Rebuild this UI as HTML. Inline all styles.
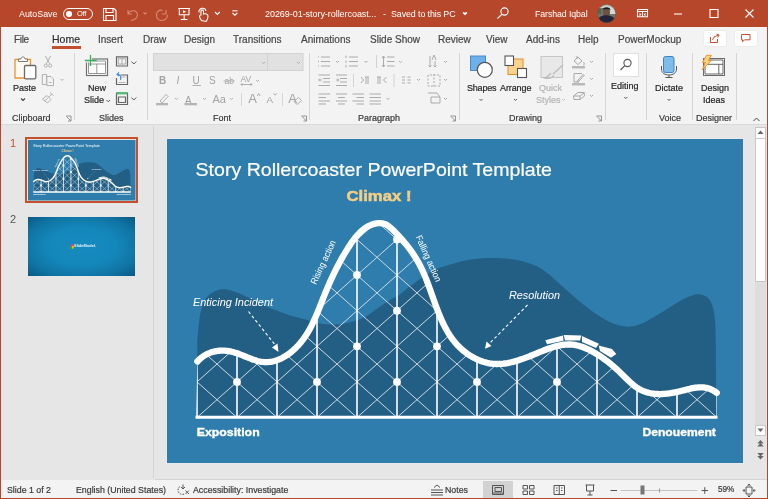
<!DOCTYPE html>
<html><head><meta charset="utf-8">
<style>
*{margin:0;padding:0;box-sizing:border-box}
html,body{width:768px;height:499px;overflow:hidden;background:#e6e6e6;font-family:"Liberation Sans",sans-serif;position:relative;-webkit-font-smoothing:antialiased}
.a,.tab,.lbl,.btn,.st{will-change:transform}
.tab,.lbl,.btn,.st{-webkit-text-stroke:0.2px currentColor}
.a{position:absolute;white-space:nowrap}
.t{color:#fff;font-size:9px}
.tab{position:absolute;top:33px;font-size:10px;color:#474747;white-space:nowrap}
.lbl{position:absolute;top:113px;font-size:9px;color:#383838;white-space:nowrap}
.btn{position:absolute;font-size:9px;color:#262626;white-space:nowrap}
.sep{position:absolute;top:53px;width:1px;height:67px;background:#d6d6d6}
.st{position:absolute;top:485px;font-size:8.8px;color:#3a3a3a;white-space:nowrap}
svg{position:absolute;overflow:visible;will-change:transform}
</style></head><body>
<!-- title bar -->
<div class="a" style="left:0;top:0;width:768px;height:27px;background:#b7472a"></div>
<!-- window borders -->
<div class="a" style="left:0;top:27px;width:1px;height:472px;background:#b7472a"></div>
<div class="a" style="left:767px;top:27px;width:1px;height:472px;background:#b7472a"></div>
<div class="a" style="left:0;top:498px;width:768px;height:1px;background:#b7472a"></div>
<!-- ribbon area -->
<div class="a" style="left:1px;top:27px;width:766px;height:97px;background:#f3f3f3"></div>
<div class="a" style="left:1px;top:124px;width:766px;height:1px;background:#dadada"></div>
<!-- status bar -->
<div class="a" style="left:1px;top:480px;width:766px;height:18px;background:#f3f3f3"></div>
<div class="a" style="left:155px;top:479px;width:612px;height:1px;background:#d4d4d4"></div>
<div class="a" style="left:153.2px;top:126px;width:1.1px;height:352px;background:#d4d4d4"></div>
<!-- main slide -->
<div class="a" style="left:166px;top:138px;width:578px;height:326px;background:#e9e9e9"></div>
<svg style="left:167px;top:139px" width="576" height="324" viewBox="167 139 576 324">
<defs><clipPath id="clipA"><path d="M197.39,361.50 L198.39,360.42 L199.43,359.40 L200.50,358.45 L201.60,357.55 L202.72,356.70 L203.87,355.92 L205.05,355.19 L206.25,354.51 L207.47,353.89 L208.71,353.33 L209.97,352.82 L211.25,352.36 L212.54,351.96 L213.85,351.61 L215.18,351.31 L216.52,351.07 L217.87,350.88 L219.23,350.74 L220.59,350.65 L221.97,350.61 L223.35,350.62 L224.73,350.68 L226.12,350.79 L227.51,350.95 L228.90,351.16 L230.29,351.41 L231.68,351.72 L233.06,352.07 L234.44,352.46 L235.82,352.88 L237.19,353.34 L238.56,353.83 L239.93,354.34 L241.30,354.87 L242.66,355.41 L244.02,355.96 L245.38,356.52 L246.73,357.07 L248.08,357.62 L249.43,358.16 L250.78,358.69 L252.12,359.19 L253.46,359.67 L254.80,360.13 L256.14,360.55 L257.47,360.93 L258.81,361.27 L260.14,361.56 L261.47,361.80 L262.79,361.98 L264.12,362.10 L265.44,362.16 L266.76,362.16 L268.08,362.10 L269.39,361.98 L270.70,361.80 L272.00,361.57 L273.30,361.29 L274.59,360.95 L275.87,360.57 L277.14,360.14 L278.40,359.66 L279.65,359.13 L280.90,358.56 L282.13,357.95 L283.34,357.30 L284.55,356.61 L285.74,355.89 L286.92,355.12 L288.08,354.33 L289.22,353.50 L290.35,352.63 L291.46,351.74 L292.56,350.82 L293.63,349.88 L294.69,348.91 L295.73,347.92 L296.74,346.90 L297.73,345.87 L298.70,344.81 L299.65,343.74 L300.58,342.66 L301.48,341.56 L302.35,340.44 L303.20,339.31 L304.03,338.18 L304.84,337.03 L305.63,335.86 L306.40,334.69 L307.15,333.51 L307.88,332.31 L308.59,331.11 L309.28,329.90 L309.96,328.67 L310.62,327.44 L311.27,326.21 L311.90,324.96 L312.52,323.71 L313.13,322.45 L313.73,321.19 L314.31,319.92 L314.89,318.64 L315.45,317.36 L316.01,316.08 L316.55,314.79 L317.10,313.50 L317.63,312.21 L318.16,310.92 L318.68,309.62 L319.20,308.32 L319.72,307.02 L320.23,305.72 L320.74,304.42 L321.25,303.13 L321.76,301.83 L322.27,300.53 L322.78,299.24 L323.29,297.94 L323.80,296.65 L324.32,295.37 L324.84,294.08 L325.37,292.80 L325.89,291.52 L326.42,290.25 L326.96,288.98 L327.50,287.71 L328.04,286.44 L328.59,285.18 L329.14,283.91 L329.70,282.65 L330.26,281.40 L330.83,280.14 L331.40,278.89 L331.98,277.64 L332.56,276.39 L333.15,275.14 L333.75,273.90 L334.35,272.66 L334.96,271.42 L335.57,270.18 L336.19,268.94 L336.82,267.71 L337.45,266.48 L338.10,265.25 L338.75,264.02 L339.41,262.79 L340.07,261.56 L340.74,260.34 L341.43,259.12 L342.12,257.89 L342.81,256.67 L343.52,255.45 L344.24,254.24 L344.96,253.02 L345.70,251.81 L346.44,250.59 L347.20,249.38 L347.96,248.17 L348.73,246.96 L349.52,245.75 L350.31,244.54 L351.12,243.35 L351.94,242.16 L352.78,240.99 L353.63,239.83 L354.50,238.69 L355.39,237.56 L356.29,236.46 L357.21,235.39 L358.16,234.34 L359.12,233.32 L360.11,232.33 L361.12,231.38 L362.16,230.46 L363.22,229.59 L364.30,228.75 L365.42,227.96 L366.56,227.22 L367.73,226.53 L368.93,225.88 L370.16,225.29 L371.43,224.76 L372.71,224.29 L374.02,223.90 L375.35,223.57 L376.68,223.33 L378.02,223.17 L379.35,223.11 L380.67,223.15 L381.98,223.30 L383.27,223.56 L384.53,223.94 L385.76,224.44 L386.95,225.08 L388.11,225.82 L389.23,226.66 L390.33,227.57 L391.41,228.54 L392.47,229.55 L393.51,230.57 L394.54,231.60 L395.56,232.64 L396.56,233.67 L397.56,234.71 L398.54,235.76 L399.51,236.80 L400.46,237.85 L401.41,238.91 L402.34,239.96 L403.26,241.03 L404.16,242.09 L405.06,243.16 L405.94,244.24 L406.81,245.32 L407.66,246.41 L408.51,247.51 L409.34,248.61 L410.16,249.71 L410.96,250.83 L411.76,251.95 L412.54,253.07 L413.31,254.21 L414.06,255.35 L414.80,256.50 L415.53,257.66 L416.25,258.83 L416.95,260.00 L417.64,261.18 L418.32,262.38 L418.98,263.58 L419.63,264.79 L420.27,266.01 L420.89,267.24 L421.51,268.48 L422.10,269.73 L422.69,270.99 L423.27,272.26 L423.83,273.54 L424.39,274.82 L424.94,276.11 L425.47,277.41 L426.00,278.71 L426.52,280.02 L427.04,281.34 L427.55,282.66 L428.05,283.98 L428.54,285.31 L429.04,286.64 L429.52,287.98 L430.01,289.32 L430.49,290.66 L430.97,292.00 L431.45,293.35 L431.92,294.69 L432.40,296.04 L432.87,297.39 L433.35,298.73 L433.82,300.08 L434.30,301.42 L434.78,302.76 L435.27,304.10 L435.75,305.44 L436.25,306.78 L436.74,308.11 L437.24,309.44 L437.75,310.76 L438.26,312.08 L438.79,313.39 L439.31,314.70 L439.85,316.00 L440.39,317.30 L440.95,318.59 L441.51,319.87 L442.09,321.14 L442.68,322.41 L443.27,323.66 L443.88,324.91 L444.51,326.15 L445.14,327.38 L445.79,328.60 L446.46,329.80 L447.14,331.00 L447.83,332.18 L448.55,333.35 L449.28,334.51 L450.02,335.66 L450.79,336.79 L451.57,337.91 L452.38,339.01 L453.20,340.10 L454.04,341.17 L454.91,342.23 L455.79,343.27 L456.70,344.30 L457.64,345.30 L458.59,346.29 L459.57,347.27 L460.57,348.22 L461.59,349.15 L462.64,350.07 L463.70,350.96 L464.79,351.83 L465.89,352.67 L467.01,353.50 L468.16,354.29 L469.31,355.07 L470.49,355.81 L471.68,356.53 L472.89,357.22 L474.11,357.88 L475.34,358.52 L476.59,359.12 L477.85,359.69 L479.12,360.23 L480.40,360.74 L481.70,361.21 L483.00,361.65 L484.31,362.06 L485.63,362.43 L486.96,362.76 L488.30,363.05 L489.64,363.31 L490.98,363.52 L492.34,363.70 L493.69,363.84 L495.06,363.93 L496.42,363.98 L497.79,364.00 L499.16,363.97 L500.53,363.91 L501.90,363.80 L503.28,363.67 L504.65,363.50 L506.03,363.30 L507.41,363.07 L508.79,362.80 L510.17,362.51 L511.55,362.20 L512.94,361.86 L514.32,361.49 L515.70,361.10 L517.08,360.70 L518.46,360.27 L519.84,359.82 L521.21,359.36 L522.59,358.88 L523.96,358.39 L525.33,357.88 L526.70,357.37 L528.07,356.84 L529.43,356.31 L530.79,355.77 L532.15,355.22 L533.50,354.67 L534.85,354.11 L536.20,353.56 L537.54,353.00 L538.87,352.45 L540.21,351.90 L541.54,351.36 L542.87,350.82 L544.19,350.30 L545.51,349.78 L546.83,349.28 L548.15,348.79 L549.47,348.32 L550.78,347.87 L552.09,347.44 L553.41,347.03 L554.72,346.64 L556.03,346.28 L557.34,345.95 L558.65,345.64 L559.96,345.37 L561.27,345.13 L562.58,344.92 L563.89,344.75 L565.21,344.62 L566.52,344.53 L567.84,344.48 L569.16,344.48 L570.48,344.52 L571.80,344.60 L573.13,344.74 L574.45,344.93 L575.78,345.16 L577.12,345.45 L578.45,345.78 L579.78,346.15 L581.11,346.56 L582.43,347.01 L583.75,347.50 L585.07,348.02 L586.38,348.58 L587.68,349.16 L588.98,349.78 L590.26,350.42 L591.54,351.08 L592.80,351.76 L594.06,352.47 L595.29,353.19 L596.52,353.92 L597.73,354.67 L598.92,355.43 L600.10,356.20 L601.26,356.98 L602.40,357.77 L603.53,358.56 L604.65,359.37 L605.76,360.19 L606.85,361.02 L607.93,361.85 L609.01,362.70 L610.07,363.56 L611.13,364.43 L612.17,365.31 L613.21,366.20 L614.25,367.10 L615.28,368.01 L616.31,368.93 L617.33,369.86 L618.35,370.81 L619.37,371.76 L620.39,372.73 L621.40,373.70 L622.42,374.69 L623.44,375.69 L624.46,376.70 L625.49,377.72 L626.52,378.74 L627.56,379.76 L628.60,380.78 L629.66,381.78 L630.72,382.76 L631.80,383.72 L632.89,384.66 L633.99,385.56 L635.11,386.42 L636.25,387.24 L637.41,388.02 L638.58,388.74 L639.78,389.41 L640.99,390.02 L642.22,390.59 L643.47,391.11 L644.74,391.59 L646.01,392.02 L647.31,392.40 L648.61,392.74 L649.93,393.04 L651.26,393.29 L652.61,393.51 L653.96,393.69 L655.32,393.82 L656.69,393.93 L658.07,393.99 L659.45,394.03 L660.84,394.03 L662.23,393.99 L663.63,393.93 L665.04,393.83 L666.44,393.71 L667.85,393.56 L669.26,393.38 L670.67,393.18 L672.08,392.96 L673.49,392.71 L674.89,392.44 L676.29,392.14 L677.69,391.83 L679.09,391.50 L680.48,391.16 L681.86,390.81 L683.24,390.45 L684.62,390.09 L685.99,389.73 L687.36,389.38 L688.72,389.04 L690.08,388.72 L691.44,388.42 L692.79,388.15 L694.14,387.91 L695.49,387.70 L696.83,387.53 L698.17,387.41 L699.51,387.34 L700.85,387.32 L702.18,387.35 L703.52,387.45 L704.85,387.62 L706.17,387.85 L707.50,388.16 L708.82,388.56 L710.15,389.03 L711.47,389.60 L712.79,390.26 L714.11,391.02 L715.43,391.88 L716.75,392.85 L716.6,417.5 L196,417.5 Z"/></clipPath></defs>

<rect x="167" y="139" width="576" height="324" fill="#2e7dad"/>
<path d="M197,417.5 L197.3,345  C197.4,343.5 197.1,341.6 197.7,336 C198.3,330.4 199.2,318.2 200.8,311.7 C202.4,305.2 204.3,300.5 207,297 C209.7,293.5 213.5,291.7 217,290.5 C220.5,289.3 223.3,288.9 228,289.8 C232.7,290.7 239.2,293.5 245,296 C250.8,298.5 255.8,301.9 263,305 C270.2,308.1 281.8,312.6 288,314.8 C294.2,317.0 295.8,316.9 300,318 C304.2,319.1 308.7,320.6 313,321.7 C317.3,322.8 321.7,323.9 326,324.3 C330.3,324.7 334.7,324.7 339,324.3 C343.3,323.9 347.7,322.9 352,321.7 C356.3,320.5 360.7,319.3 365,317 C369.3,314.7 373.7,310.9 378,308 C382.3,305.1 387.3,301.8 391,299.5 C394.7,297.2 396.8,296.5 400,294.3 C403.2,292.1 406.3,289.1 410,286.3 C413.7,283.6 418.0,280.5 422,277.8 C426.0,275.1 430.0,272.0 434,270 C438.0,268.0 442.0,267.1 446,265.8 C450.0,264.5 454.0,263.2 458,262.2 C462.0,261.2 466.3,260.4 470,259.8 C473.7,259.2 475.0,258.8 480,258.5 C485.0,258.2 493.2,257.9 500,258.3 C506.8,258.7 513.8,259.0 520.8,260.8 C527.8,262.6 534.8,264.7 541.7,269 C548.7,273.3 555.5,280.5 562.5,286.5 C569.5,292.5 577.1,299.6 584,305 C590.9,310.4 597.7,315.5 604,319 C610.3,322.5 616.3,325.0 622,326 C627.7,327.0 631.7,327.1 638,325 C644.3,322.9 653.0,317.5 660,313.5 C667.0,309.5 674.7,304.0 680,301 C685.3,298.0 688.5,296.6 692,295.5 C695.5,294.4 698.3,294.1 701,294.5 C703.7,294.9 706.1,296.1 708,298 C709.9,299.9 711.3,302.3 712.5,306 C713.7,309.7 714.5,314.3 715,320 C715.5,325.7 715.7,336.7 715.8,340 L716.2,417.5 Z" fill="#235f84"/>
<g clip-path="url(#clipA)">
<path d="M197,-9.7 L717,-472.5 M197,844.7 L717,1307.5 M197,25.9 L717,-436.9 M197,809.1 L717,1271.9 M197,61.5 L717,-401.3 M197,773.5 L717,1236.3 M197,97.1 L717,-365.7 M197,737.9 L717,1200.7 M197,132.7 L717,-330.1 M197,702.3 L717,1165.1 M197,168.3 L717,-294.5 M197,666.7 L717,1129.5 M197,203.9 L717,-258.9 M197,631.1 L717,1093.9 M197,239.5 L717,-223.3 M197,595.5 L717,1058.3 M197,275.1 L717,-187.7 M197,559.9 L717,1022.7 M197,310.7 L717,-152.1 M197,524.3 L717,987.1 M197,346.3 L717,-116.5 M197,488.7 L717,951.5 M197,381.9 L717,-80.9 M197,453.1 L717,915.9 M197,417.5 L717,-45.3 M197,417.5 L717,880.3 M197,453.1 L717,-9.7 M197,381.9 L717,844.7 M197,488.7 L717,25.9 M197,346.3 L717,809.1 M197,524.3 L717,61.5 M197,310.7 L717,773.5 M197,559.9 L717,97.1 M197,275.1 L717,737.9 M197,595.5 L717,132.7 M197,239.5 L717,702.3 M197,631.1 L717,168.3 M197,203.9 L717,666.7 M197,666.7 L717,203.9 M197,168.3 L717,631.1 M197,702.3 L717,239.5 M197,132.7 L717,595.5 M197,737.9 L717,275.1 M197,97.1 L717,559.9 M197,773.5 L717,310.7 M197,61.5 L717,524.3 M197,809.1 L717,346.3 M197,25.9 L717,488.7 M197,844.7 L717,381.9 M197,-9.7 L717,453.1 M197,880.3 L717,417.5 M197,-45.3 L717,417.5" stroke="#d5e0e8" stroke-width="0.95" fill="none"/>
<path d="M197,180 V417.5 M237,180 V417.5 M277,180 V417.5 M317,180 V417.5 M357,180 V417.5 M397,180 V417.5 M437,180 V417.5 M477,180 V417.5 M517,180 V417.5 M557,180 V417.5 M597,180 V417.5 M637,180 V417.5 M677,180 V417.5 M717,180 V417.5" stroke="#fff" stroke-width="1.6" fill="none"/>
</g>
<path d="M195.5,417.3 H717.5" stroke="#fff" stroke-width="3.0"/>
<path d="M197.39,361.50 L198.39,360.42 L199.43,359.40 L200.50,358.45 L201.60,357.55 L202.72,356.70 L203.87,355.92 L205.05,355.19 L206.25,354.51 L207.47,353.89 L208.71,353.33 L209.97,352.82 L211.25,352.36 L212.54,351.96 L213.85,351.61 L215.18,351.31 L216.52,351.07 L217.87,350.88 L219.23,350.74 L220.59,350.65 L221.97,350.61 L223.35,350.62 L224.73,350.68 L226.12,350.79 L227.51,350.95 L228.90,351.16 L230.29,351.41 L231.68,351.72 L233.06,352.07 L234.44,352.46 L235.82,352.88 L237.19,353.34 L238.56,353.83 L239.93,354.34 L241.30,354.87 L242.66,355.41 L244.02,355.96 L245.38,356.52 L246.73,357.07 L248.08,357.62 L249.43,358.16 L250.78,358.69 L252.12,359.19 L253.46,359.67 L254.80,360.13 L256.14,360.55 L257.47,360.93 L258.81,361.27 L260.14,361.56 L261.47,361.80 L262.79,361.98 L264.12,362.10 L265.44,362.16 L266.76,362.16 L268.08,362.10 L269.39,361.98 L270.70,361.80 L272.00,361.57 L273.30,361.29 L274.59,360.95 L275.87,360.57 L277.14,360.14 L278.40,359.66 L279.65,359.13 L280.90,358.56 L282.13,357.95 L283.34,357.30 L284.55,356.61 L285.74,355.89 L286.92,355.12 L288.08,354.33 L289.22,353.50 L290.35,352.63 L291.46,351.74 L292.56,350.82 L293.63,349.88 L294.69,348.91 L295.73,347.92 L296.74,346.90 L297.73,345.87 L298.70,344.81 L299.65,343.74 L300.58,342.66 L301.48,341.56 L302.35,340.44 L303.20,339.31 L304.03,338.18 L304.84,337.03 L305.63,335.86 L306.40,334.69 L307.15,333.51 L307.88,332.31 L308.59,331.11 L309.28,329.90 L309.96,328.67 L310.62,327.44 L311.27,326.21 L311.90,324.96 L312.52,323.71 L313.13,322.45 L313.73,321.19 L314.31,319.92 L314.89,318.64 L315.45,317.36 L316.01,316.08 L316.55,314.79 L317.10,313.50 L317.63,312.21 L318.16,310.92 L318.68,309.62 L319.20,308.32 L319.72,307.02 L320.23,305.72 L320.74,304.42 L321.25,303.13 L321.76,301.83 L322.27,300.53 L322.78,299.24 L323.29,297.94 L323.80,296.65 L324.32,295.37 L324.84,294.08 L325.37,292.80 L325.89,291.52 L326.42,290.25 L326.96,288.98 L327.50,287.71 L328.04,286.44 L328.59,285.18 L329.14,283.91 L329.70,282.65 L330.26,281.40 L330.83,280.14 L331.40,278.89 L331.98,277.64 L332.56,276.39 L333.15,275.14 L333.75,273.90 L334.35,272.66 L334.96,271.42 L335.57,270.18 L336.19,268.94 L336.82,267.71 L337.45,266.48 L338.10,265.25 L338.75,264.02 L339.41,262.79 L340.07,261.56 L340.74,260.34 L341.43,259.12 L342.12,257.89 L342.81,256.67 L343.52,255.45 L344.24,254.24 L344.96,253.02 L345.70,251.81 L346.44,250.59 L347.20,249.38 L347.96,248.17 L348.73,246.96 L349.52,245.75 L350.31,244.54 L351.12,243.35 L351.94,242.16 L352.78,240.99 L353.63,239.83 L354.50,238.69 L355.39,237.56 L356.29,236.46 L357.21,235.39 L358.16,234.34 L359.12,233.32 L360.11,232.33 L361.12,231.38 L362.16,230.46 L363.22,229.59 L364.30,228.75 L365.42,227.96 L366.56,227.22 L367.73,226.53 L368.93,225.88 L370.16,225.29 L371.43,224.76 L372.71,224.29 L374.02,223.90 L375.35,223.57 L376.68,223.33 L378.02,223.17 L379.35,223.11 L380.67,223.15 L381.98,223.30 L383.27,223.56 L384.53,223.94 L385.76,224.44 L386.95,225.08 L388.11,225.82 L389.23,226.66 L390.33,227.57 L391.41,228.54 L392.47,229.55 L393.51,230.57 L394.54,231.60 L395.56,232.64 L396.56,233.67 L397.56,234.71 L398.54,235.76 L399.51,236.80 L400.46,237.85 L401.41,238.91 L402.34,239.96 L403.26,241.03 L404.16,242.09 L405.06,243.16 L405.94,244.24 L406.81,245.32 L407.66,246.41 L408.51,247.51 L409.34,248.61 L410.16,249.71 L410.96,250.83 L411.76,251.95 L412.54,253.07 L413.31,254.21 L414.06,255.35 L414.80,256.50 L415.53,257.66 L416.25,258.83 L416.95,260.00 L417.64,261.18 L418.32,262.38 L418.98,263.58 L419.63,264.79 L420.27,266.01 L420.89,267.24 L421.51,268.48 L422.10,269.73 L422.69,270.99 L423.27,272.26 L423.83,273.54 L424.39,274.82 L424.94,276.11 L425.47,277.41 L426.00,278.71 L426.52,280.02 L427.04,281.34 L427.55,282.66 L428.05,283.98 L428.54,285.31 L429.04,286.64 L429.52,287.98 L430.01,289.32 L430.49,290.66 L430.97,292.00 L431.45,293.35 L431.92,294.69 L432.40,296.04 L432.87,297.39 L433.35,298.73 L433.82,300.08 L434.30,301.42 L434.78,302.76 L435.27,304.10 L435.75,305.44 L436.25,306.78 L436.74,308.11 L437.24,309.44 L437.75,310.76 L438.26,312.08 L438.79,313.39 L439.31,314.70 L439.85,316.00 L440.39,317.30 L440.95,318.59 L441.51,319.87 L442.09,321.14 L442.68,322.41 L443.27,323.66 L443.88,324.91 L444.51,326.15 L445.14,327.38 L445.79,328.60 L446.46,329.80 L447.14,331.00 L447.83,332.18 L448.55,333.35 L449.28,334.51 L450.02,335.66 L450.79,336.79 L451.57,337.91 L452.38,339.01 L453.20,340.10 L454.04,341.17 L454.91,342.23 L455.79,343.27 L456.70,344.30 L457.64,345.30 L458.59,346.29 L459.57,347.27 L460.57,348.22 L461.59,349.15 L462.64,350.07 L463.70,350.96 L464.79,351.83 L465.89,352.67 L467.01,353.50 L468.16,354.29 L469.31,355.07 L470.49,355.81 L471.68,356.53 L472.89,357.22 L474.11,357.88 L475.34,358.52 L476.59,359.12 L477.85,359.69 L479.12,360.23 L480.40,360.74 L481.70,361.21 L483.00,361.65 L484.31,362.06 L485.63,362.43 L486.96,362.76 L488.30,363.05 L489.64,363.31 L490.98,363.52 L492.34,363.70 L493.69,363.84 L495.06,363.93 L496.42,363.98 L497.79,364.00 L499.16,363.97 L500.53,363.91 L501.90,363.80 L503.28,363.67 L504.65,363.50 L506.03,363.30 L507.41,363.07 L508.79,362.80 L510.17,362.51 L511.55,362.20 L512.94,361.86 L514.32,361.49 L515.70,361.10 L517.08,360.70 L518.46,360.27 L519.84,359.82 L521.21,359.36 L522.59,358.88 L523.96,358.39 L525.33,357.88 L526.70,357.37 L528.07,356.84 L529.43,356.31 L530.79,355.77 L532.15,355.22 L533.50,354.67 L534.85,354.11 L536.20,353.56 L537.54,353.00 L538.87,352.45 L540.21,351.90 L541.54,351.36 L542.87,350.82 L544.19,350.30 L545.51,349.78 L546.83,349.28 L548.15,348.79 L549.47,348.32 L550.78,347.87 L552.09,347.44 L553.41,347.03 L554.72,346.64 L556.03,346.28 L557.34,345.95 L558.65,345.64 L559.96,345.37 L561.27,345.13 L562.58,344.92 L563.89,344.75 L565.21,344.62 L566.52,344.53 L567.84,344.48 L569.16,344.48 L570.48,344.52 L571.80,344.60 L573.13,344.74 L574.45,344.93 L575.78,345.16 L577.12,345.45 L578.45,345.78 L579.78,346.15 L581.11,346.56 L582.43,347.01 L583.75,347.50 L585.07,348.02 L586.38,348.58 L587.68,349.16 L588.98,349.78 L590.26,350.42 L591.54,351.08 L592.80,351.76 L594.06,352.47 L595.29,353.19 L596.52,353.92 L597.73,354.67 L598.92,355.43 L600.10,356.20 L601.26,356.98 L602.40,357.77 L603.53,358.56 L604.65,359.37 L605.76,360.19 L606.85,361.02 L607.93,361.85 L609.01,362.70 L610.07,363.56 L611.13,364.43 L612.17,365.31 L613.21,366.20 L614.25,367.10 L615.28,368.01 L616.31,368.93 L617.33,369.86 L618.35,370.81 L619.37,371.76 L620.39,372.73 L621.40,373.70 L622.42,374.69 L623.44,375.69 L624.46,376.70 L625.49,377.72 L626.52,378.74 L627.56,379.76 L628.60,380.78 L629.66,381.78 L630.72,382.76 L631.80,383.72 L632.89,384.66 L633.99,385.56 L635.11,386.42 L636.25,387.24 L637.41,388.02 L638.58,388.74 L639.78,389.41 L640.99,390.02 L642.22,390.59 L643.47,391.11 L644.74,391.59 L646.01,392.02 L647.31,392.40 L648.61,392.74 L649.93,393.04 L651.26,393.29 L652.61,393.51 L653.96,393.69 L655.32,393.82 L656.69,393.93 L658.07,393.99 L659.45,394.03 L660.84,394.03 L662.23,393.99 L663.63,393.93 L665.04,393.83 L666.44,393.71 L667.85,393.56 L669.26,393.38 L670.67,393.18 L672.08,392.96 L673.49,392.71 L674.89,392.44 L676.29,392.14 L677.69,391.83 L679.09,391.50 L680.48,391.16 L681.86,390.81 L683.24,390.45 L684.62,390.09 L685.99,389.73 L687.36,389.38 L688.72,389.04 L690.08,388.72 L691.44,388.42 L692.79,388.15 L694.14,387.91 L695.49,387.70 L696.83,387.53 L698.17,387.41 L699.51,387.34 L700.85,387.32 L702.18,387.35 L703.52,387.45 L704.85,387.62 L706.17,387.85 L707.50,388.16 L708.82,388.56 L710.15,389.03 L711.47,389.60 L712.79,390.26 L714.11,391.02 L715.43,391.88 L716.75,392.85" stroke="#fff" stroke-width="6.3" fill="none" stroke-linecap="round"/>
<g fill="#fff"><circle cx="237" cy="382" r="3.9"/><circle cx="317" cy="382" r="3.9"/><circle cx="357" cy="346.3" r="3.9"/><circle cx="357" cy="275" r="3.9"/><circle cx="397" cy="382" r="3.9"/><circle cx="397" cy="310.7" r="3.9"/><circle cx="397" cy="239.5" r="3.9"/><circle cx="437" cy="346.3" r="3.9"/><circle cx="477" cy="382" r="3.9"/><circle cx="557" cy="382" r="3.9"/>
<path d="M545.3,340.2 L563,335.5 L563.5,340.8 L547,344.3 Z"/>
<path d="M563.7,335 L581.3,335.5 L580,340.5 L565,340.5 Z"/>
<path d="M581.9,336 L598.9,343.8 L596,348 L582,342 Z"/>
<path d="M598.7,345.4 L612,349 L616.3,353.9 L611,357.8 L600,351 Z"/>
</g>
<g stroke="#fff" stroke-width="1.1" stroke-dasharray="3,2.5" fill="none">
<path d="M248.5,311.5 L276,346"/>
<path d="M527.5,305 L488,345"/>
</g>
<g fill="#fff">
<path d="M278.5,352 L272,347.5 L277.5,343.5 Z"/>
<path d="M485,348.7 L486.5,341.5 L491.5,346 Z"/>
</g>

<text x="195.5" y="175.8" font-family="Liberation Sans" font-size="19" fill="#fff" stroke="#fff" stroke-width="0.2" textLength="356.5" lengthAdjust="spacingAndGlyphs">Story Rollercoaster PowerPoint Template</text>
<text x="346.5" y="201" font-family="Liberation Sans" font-weight="bold" font-size="14.5" fill="#f3cf86" stroke="#f3cf86" stroke-width="0.5" textLength="65" lengthAdjust="spacingAndGlyphs">Climax !</text>
<text x="193" y="305.8" font-family="Liberation Sans" font-style="italic" font-size="11" fill="#fff" textLength="80" lengthAdjust="spacingAndGlyphs">Enticing Incident</text>
<text x="509" y="298.5" font-family="Liberation Sans" font-style="italic" font-size="11" fill="#fff" textLength="51" lengthAdjust="spacingAndGlyphs">Resolution</text>
<text x="196.7" y="435.8" font-family="Liberation Sans" font-weight="bold" font-size="11" fill="#fff" stroke="#fff" stroke-width="0.35" textLength="63" lengthAdjust="spacingAndGlyphs">Exposition</text>
<text x="642.4" y="435.5" font-family="Liberation Sans" font-weight="bold" font-size="11" fill="#fff" stroke="#fff" stroke-width="0.35" textLength="73.5" lengthAdjust="spacingAndGlyphs">Denouement</text>
<text transform="translate(316,285) rotate(-65)" font-family="Liberation Sans" font-size="9.3" fill="#fff" textLength="47.5" lengthAdjust="spacingAndGlyphs">Rising action</text>
<text transform="translate(415.5,237) rotate(66)" font-family="Liberation Sans" font-size="9.3" fill="#fff" textLength="50" lengthAdjust="spacingAndGlyphs">Falling action</text>

</svg>
<!-- thumbnail 1 -->
<div class="a" style="left:25px;top:137px;width:113px;height:66px;border:2.5px solid #c4502e"></div>
<svg style="left:28px;top:140px" width="107.5" height="60.5" viewBox="167 139 576 324" preserveAspectRatio="none">
<defs><clipPath id="clipB"><path d="M197.39,361.50 L198.39,360.42 L199.43,359.40 L200.50,358.45 L201.60,357.55 L202.72,356.70 L203.87,355.92 L205.05,355.19 L206.25,354.51 L207.47,353.89 L208.71,353.33 L209.97,352.82 L211.25,352.36 L212.54,351.96 L213.85,351.61 L215.18,351.31 L216.52,351.07 L217.87,350.88 L219.23,350.74 L220.59,350.65 L221.97,350.61 L223.35,350.62 L224.73,350.68 L226.12,350.79 L227.51,350.95 L228.90,351.16 L230.29,351.41 L231.68,351.72 L233.06,352.07 L234.44,352.46 L235.82,352.88 L237.19,353.34 L238.56,353.83 L239.93,354.34 L241.30,354.87 L242.66,355.41 L244.02,355.96 L245.38,356.52 L246.73,357.07 L248.08,357.62 L249.43,358.16 L250.78,358.69 L252.12,359.19 L253.46,359.67 L254.80,360.13 L256.14,360.55 L257.47,360.93 L258.81,361.27 L260.14,361.56 L261.47,361.80 L262.79,361.98 L264.12,362.10 L265.44,362.16 L266.76,362.16 L268.08,362.10 L269.39,361.98 L270.70,361.80 L272.00,361.57 L273.30,361.29 L274.59,360.95 L275.87,360.57 L277.14,360.14 L278.40,359.66 L279.65,359.13 L280.90,358.56 L282.13,357.95 L283.34,357.30 L284.55,356.61 L285.74,355.89 L286.92,355.12 L288.08,354.33 L289.22,353.50 L290.35,352.63 L291.46,351.74 L292.56,350.82 L293.63,349.88 L294.69,348.91 L295.73,347.92 L296.74,346.90 L297.73,345.87 L298.70,344.81 L299.65,343.74 L300.58,342.66 L301.48,341.56 L302.35,340.44 L303.20,339.31 L304.03,338.18 L304.84,337.03 L305.63,335.86 L306.40,334.69 L307.15,333.51 L307.88,332.31 L308.59,331.11 L309.28,329.90 L309.96,328.67 L310.62,327.44 L311.27,326.21 L311.90,324.96 L312.52,323.71 L313.13,322.45 L313.73,321.19 L314.31,319.92 L314.89,318.64 L315.45,317.36 L316.01,316.08 L316.55,314.79 L317.10,313.50 L317.63,312.21 L318.16,310.92 L318.68,309.62 L319.20,308.32 L319.72,307.02 L320.23,305.72 L320.74,304.42 L321.25,303.13 L321.76,301.83 L322.27,300.53 L322.78,299.24 L323.29,297.94 L323.80,296.65 L324.32,295.37 L324.84,294.08 L325.37,292.80 L325.89,291.52 L326.42,290.25 L326.96,288.98 L327.50,287.71 L328.04,286.44 L328.59,285.18 L329.14,283.91 L329.70,282.65 L330.26,281.40 L330.83,280.14 L331.40,278.89 L331.98,277.64 L332.56,276.39 L333.15,275.14 L333.75,273.90 L334.35,272.66 L334.96,271.42 L335.57,270.18 L336.19,268.94 L336.82,267.71 L337.45,266.48 L338.10,265.25 L338.75,264.02 L339.41,262.79 L340.07,261.56 L340.74,260.34 L341.43,259.12 L342.12,257.89 L342.81,256.67 L343.52,255.45 L344.24,254.24 L344.96,253.02 L345.70,251.81 L346.44,250.59 L347.20,249.38 L347.96,248.17 L348.73,246.96 L349.52,245.75 L350.31,244.54 L351.12,243.35 L351.94,242.16 L352.78,240.99 L353.63,239.83 L354.50,238.69 L355.39,237.56 L356.29,236.46 L357.21,235.39 L358.16,234.34 L359.12,233.32 L360.11,232.33 L361.12,231.38 L362.16,230.46 L363.22,229.59 L364.30,228.75 L365.42,227.96 L366.56,227.22 L367.73,226.53 L368.93,225.88 L370.16,225.29 L371.43,224.76 L372.71,224.29 L374.02,223.90 L375.35,223.57 L376.68,223.33 L378.02,223.17 L379.35,223.11 L380.67,223.15 L381.98,223.30 L383.27,223.56 L384.53,223.94 L385.76,224.44 L386.95,225.08 L388.11,225.82 L389.23,226.66 L390.33,227.57 L391.41,228.54 L392.47,229.55 L393.51,230.57 L394.54,231.60 L395.56,232.64 L396.56,233.67 L397.56,234.71 L398.54,235.76 L399.51,236.80 L400.46,237.85 L401.41,238.91 L402.34,239.96 L403.26,241.03 L404.16,242.09 L405.06,243.16 L405.94,244.24 L406.81,245.32 L407.66,246.41 L408.51,247.51 L409.34,248.61 L410.16,249.71 L410.96,250.83 L411.76,251.95 L412.54,253.07 L413.31,254.21 L414.06,255.35 L414.80,256.50 L415.53,257.66 L416.25,258.83 L416.95,260.00 L417.64,261.18 L418.32,262.38 L418.98,263.58 L419.63,264.79 L420.27,266.01 L420.89,267.24 L421.51,268.48 L422.10,269.73 L422.69,270.99 L423.27,272.26 L423.83,273.54 L424.39,274.82 L424.94,276.11 L425.47,277.41 L426.00,278.71 L426.52,280.02 L427.04,281.34 L427.55,282.66 L428.05,283.98 L428.54,285.31 L429.04,286.64 L429.52,287.98 L430.01,289.32 L430.49,290.66 L430.97,292.00 L431.45,293.35 L431.92,294.69 L432.40,296.04 L432.87,297.39 L433.35,298.73 L433.82,300.08 L434.30,301.42 L434.78,302.76 L435.27,304.10 L435.75,305.44 L436.25,306.78 L436.74,308.11 L437.24,309.44 L437.75,310.76 L438.26,312.08 L438.79,313.39 L439.31,314.70 L439.85,316.00 L440.39,317.30 L440.95,318.59 L441.51,319.87 L442.09,321.14 L442.68,322.41 L443.27,323.66 L443.88,324.91 L444.51,326.15 L445.14,327.38 L445.79,328.60 L446.46,329.80 L447.14,331.00 L447.83,332.18 L448.55,333.35 L449.28,334.51 L450.02,335.66 L450.79,336.79 L451.57,337.91 L452.38,339.01 L453.20,340.10 L454.04,341.17 L454.91,342.23 L455.79,343.27 L456.70,344.30 L457.64,345.30 L458.59,346.29 L459.57,347.27 L460.57,348.22 L461.59,349.15 L462.64,350.07 L463.70,350.96 L464.79,351.83 L465.89,352.67 L467.01,353.50 L468.16,354.29 L469.31,355.07 L470.49,355.81 L471.68,356.53 L472.89,357.22 L474.11,357.88 L475.34,358.52 L476.59,359.12 L477.85,359.69 L479.12,360.23 L480.40,360.74 L481.70,361.21 L483.00,361.65 L484.31,362.06 L485.63,362.43 L486.96,362.76 L488.30,363.05 L489.64,363.31 L490.98,363.52 L492.34,363.70 L493.69,363.84 L495.06,363.93 L496.42,363.98 L497.79,364.00 L499.16,363.97 L500.53,363.91 L501.90,363.80 L503.28,363.67 L504.65,363.50 L506.03,363.30 L507.41,363.07 L508.79,362.80 L510.17,362.51 L511.55,362.20 L512.94,361.86 L514.32,361.49 L515.70,361.10 L517.08,360.70 L518.46,360.27 L519.84,359.82 L521.21,359.36 L522.59,358.88 L523.96,358.39 L525.33,357.88 L526.70,357.37 L528.07,356.84 L529.43,356.31 L530.79,355.77 L532.15,355.22 L533.50,354.67 L534.85,354.11 L536.20,353.56 L537.54,353.00 L538.87,352.45 L540.21,351.90 L541.54,351.36 L542.87,350.82 L544.19,350.30 L545.51,349.78 L546.83,349.28 L548.15,348.79 L549.47,348.32 L550.78,347.87 L552.09,347.44 L553.41,347.03 L554.72,346.64 L556.03,346.28 L557.34,345.95 L558.65,345.64 L559.96,345.37 L561.27,345.13 L562.58,344.92 L563.89,344.75 L565.21,344.62 L566.52,344.53 L567.84,344.48 L569.16,344.48 L570.48,344.52 L571.80,344.60 L573.13,344.74 L574.45,344.93 L575.78,345.16 L577.12,345.45 L578.45,345.78 L579.78,346.15 L581.11,346.56 L582.43,347.01 L583.75,347.50 L585.07,348.02 L586.38,348.58 L587.68,349.16 L588.98,349.78 L590.26,350.42 L591.54,351.08 L592.80,351.76 L594.06,352.47 L595.29,353.19 L596.52,353.92 L597.73,354.67 L598.92,355.43 L600.10,356.20 L601.26,356.98 L602.40,357.77 L603.53,358.56 L604.65,359.37 L605.76,360.19 L606.85,361.02 L607.93,361.85 L609.01,362.70 L610.07,363.56 L611.13,364.43 L612.17,365.31 L613.21,366.20 L614.25,367.10 L615.28,368.01 L616.31,368.93 L617.33,369.86 L618.35,370.81 L619.37,371.76 L620.39,372.73 L621.40,373.70 L622.42,374.69 L623.44,375.69 L624.46,376.70 L625.49,377.72 L626.52,378.74 L627.56,379.76 L628.60,380.78 L629.66,381.78 L630.72,382.76 L631.80,383.72 L632.89,384.66 L633.99,385.56 L635.11,386.42 L636.25,387.24 L637.41,388.02 L638.58,388.74 L639.78,389.41 L640.99,390.02 L642.22,390.59 L643.47,391.11 L644.74,391.59 L646.01,392.02 L647.31,392.40 L648.61,392.74 L649.93,393.04 L651.26,393.29 L652.61,393.51 L653.96,393.69 L655.32,393.82 L656.69,393.93 L658.07,393.99 L659.45,394.03 L660.84,394.03 L662.23,393.99 L663.63,393.93 L665.04,393.83 L666.44,393.71 L667.85,393.56 L669.26,393.38 L670.67,393.18 L672.08,392.96 L673.49,392.71 L674.89,392.44 L676.29,392.14 L677.69,391.83 L679.09,391.50 L680.48,391.16 L681.86,390.81 L683.24,390.45 L684.62,390.09 L685.99,389.73 L687.36,389.38 L688.72,389.04 L690.08,388.72 L691.44,388.42 L692.79,388.15 L694.14,387.91 L695.49,387.70 L696.83,387.53 L698.17,387.41 L699.51,387.34 L700.85,387.32 L702.18,387.35 L703.52,387.45 L704.85,387.62 L706.17,387.85 L707.50,388.16 L708.82,388.56 L710.15,389.03 L711.47,389.60 L712.79,390.26 L714.11,391.02 L715.43,391.88 L716.75,392.85 L716.6,417.5 L196,417.5 Z"/></clipPath></defs>

<rect x="167" y="139" width="576" height="324" fill="#2e7dad"/>
<path d="M197,417.5 L197.3,345  C197.4,343.5 197.1,341.6 197.7,336 C198.3,330.4 199.2,318.2 200.8,311.7 C202.4,305.2 204.3,300.5 207,297 C209.7,293.5 213.5,291.7 217,290.5 C220.5,289.3 223.3,288.9 228,289.8 C232.7,290.7 239.2,293.5 245,296 C250.8,298.5 255.8,301.9 263,305 C270.2,308.1 281.8,312.6 288,314.8 C294.2,317.0 295.8,316.9 300,318 C304.2,319.1 308.7,320.6 313,321.7 C317.3,322.8 321.7,323.9 326,324.3 C330.3,324.7 334.7,324.7 339,324.3 C343.3,323.9 347.7,322.9 352,321.7 C356.3,320.5 360.7,319.3 365,317 C369.3,314.7 373.7,310.9 378,308 C382.3,305.1 387.3,301.8 391,299.5 C394.7,297.2 396.8,296.5 400,294.3 C403.2,292.1 406.3,289.1 410,286.3 C413.7,283.6 418.0,280.5 422,277.8 C426.0,275.1 430.0,272.0 434,270 C438.0,268.0 442.0,267.1 446,265.8 C450.0,264.5 454.0,263.2 458,262.2 C462.0,261.2 466.3,260.4 470,259.8 C473.7,259.2 475.0,258.8 480,258.5 C485.0,258.2 493.2,257.9 500,258.3 C506.8,258.7 513.8,259.0 520.8,260.8 C527.8,262.6 534.8,264.7 541.7,269 C548.7,273.3 555.5,280.5 562.5,286.5 C569.5,292.5 577.1,299.6 584,305 C590.9,310.4 597.7,315.5 604,319 C610.3,322.5 616.3,325.0 622,326 C627.7,327.0 631.7,327.1 638,325 C644.3,322.9 653.0,317.5 660,313.5 C667.0,309.5 674.7,304.0 680,301 C685.3,298.0 688.5,296.6 692,295.5 C695.5,294.4 698.3,294.1 701,294.5 C703.7,294.9 706.1,296.1 708,298 C709.9,299.9 711.3,302.3 712.5,306 C713.7,309.7 714.5,314.3 715,320 C715.5,325.7 715.7,336.7 715.8,340 L716.2,417.5 Z" fill="#235f84"/>
<g clip-path="url(#clipB)">
<path d="M197,-9.7 L717,-472.5 M197,844.7 L717,1307.5 M197,25.9 L717,-436.9 M197,809.1 L717,1271.9 M197,61.5 L717,-401.3 M197,773.5 L717,1236.3 M197,97.1 L717,-365.7 M197,737.9 L717,1200.7 M197,132.7 L717,-330.1 M197,702.3 L717,1165.1 M197,168.3 L717,-294.5 M197,666.7 L717,1129.5 M197,203.9 L717,-258.9 M197,631.1 L717,1093.9 M197,239.5 L717,-223.3 M197,595.5 L717,1058.3 M197,275.1 L717,-187.7 M197,559.9 L717,1022.7 M197,310.7 L717,-152.1 M197,524.3 L717,987.1 M197,346.3 L717,-116.5 M197,488.7 L717,951.5 M197,381.9 L717,-80.9 M197,453.1 L717,915.9 M197,417.5 L717,-45.3 M197,417.5 L717,880.3 M197,453.1 L717,-9.7 M197,381.9 L717,844.7 M197,488.7 L717,25.9 M197,346.3 L717,809.1 M197,524.3 L717,61.5 M197,310.7 L717,773.5 M197,559.9 L717,97.1 M197,275.1 L717,737.9 M197,595.5 L717,132.7 M197,239.5 L717,702.3 M197,631.1 L717,168.3 M197,203.9 L717,666.7 M197,666.7 L717,203.9 M197,168.3 L717,631.1 M197,702.3 L717,239.5 M197,132.7 L717,595.5 M197,737.9 L717,275.1 M197,97.1 L717,559.9 M197,773.5 L717,310.7 M197,61.5 L717,524.3 M197,809.1 L717,346.3 M197,25.9 L717,488.7 M197,844.7 L717,381.9 M197,-9.7 L717,453.1 M197,880.3 L717,417.5 M197,-45.3 L717,417.5" stroke="#d5e0e8" stroke-width="2.4699999999999998" fill="none"/>
<path d="M197,180 V417.5 M237,180 V417.5 M277,180 V417.5 M317,180 V417.5 M357,180 V417.5 M397,180 V417.5 M437,180 V417.5 M477,180 V417.5 M517,180 V417.5 M557,180 V417.5 M597,180 V417.5 M637,180 V417.5 M677,180 V417.5 M717,180 V417.5" stroke="#fff" stroke-width="4.16" fill="none"/>
</g>
<path d="M195.5,417.3 H717.5" stroke="#fff" stroke-width="7.800000000000001"/>
<path d="M197.39,361.50 L198.39,360.42 L199.43,359.40 L200.50,358.45 L201.60,357.55 L202.72,356.70 L203.87,355.92 L205.05,355.19 L206.25,354.51 L207.47,353.89 L208.71,353.33 L209.97,352.82 L211.25,352.36 L212.54,351.96 L213.85,351.61 L215.18,351.31 L216.52,351.07 L217.87,350.88 L219.23,350.74 L220.59,350.65 L221.97,350.61 L223.35,350.62 L224.73,350.68 L226.12,350.79 L227.51,350.95 L228.90,351.16 L230.29,351.41 L231.68,351.72 L233.06,352.07 L234.44,352.46 L235.82,352.88 L237.19,353.34 L238.56,353.83 L239.93,354.34 L241.30,354.87 L242.66,355.41 L244.02,355.96 L245.38,356.52 L246.73,357.07 L248.08,357.62 L249.43,358.16 L250.78,358.69 L252.12,359.19 L253.46,359.67 L254.80,360.13 L256.14,360.55 L257.47,360.93 L258.81,361.27 L260.14,361.56 L261.47,361.80 L262.79,361.98 L264.12,362.10 L265.44,362.16 L266.76,362.16 L268.08,362.10 L269.39,361.98 L270.70,361.80 L272.00,361.57 L273.30,361.29 L274.59,360.95 L275.87,360.57 L277.14,360.14 L278.40,359.66 L279.65,359.13 L280.90,358.56 L282.13,357.95 L283.34,357.30 L284.55,356.61 L285.74,355.89 L286.92,355.12 L288.08,354.33 L289.22,353.50 L290.35,352.63 L291.46,351.74 L292.56,350.82 L293.63,349.88 L294.69,348.91 L295.73,347.92 L296.74,346.90 L297.73,345.87 L298.70,344.81 L299.65,343.74 L300.58,342.66 L301.48,341.56 L302.35,340.44 L303.20,339.31 L304.03,338.18 L304.84,337.03 L305.63,335.86 L306.40,334.69 L307.15,333.51 L307.88,332.31 L308.59,331.11 L309.28,329.90 L309.96,328.67 L310.62,327.44 L311.27,326.21 L311.90,324.96 L312.52,323.71 L313.13,322.45 L313.73,321.19 L314.31,319.92 L314.89,318.64 L315.45,317.36 L316.01,316.08 L316.55,314.79 L317.10,313.50 L317.63,312.21 L318.16,310.92 L318.68,309.62 L319.20,308.32 L319.72,307.02 L320.23,305.72 L320.74,304.42 L321.25,303.13 L321.76,301.83 L322.27,300.53 L322.78,299.24 L323.29,297.94 L323.80,296.65 L324.32,295.37 L324.84,294.08 L325.37,292.80 L325.89,291.52 L326.42,290.25 L326.96,288.98 L327.50,287.71 L328.04,286.44 L328.59,285.18 L329.14,283.91 L329.70,282.65 L330.26,281.40 L330.83,280.14 L331.40,278.89 L331.98,277.64 L332.56,276.39 L333.15,275.14 L333.75,273.90 L334.35,272.66 L334.96,271.42 L335.57,270.18 L336.19,268.94 L336.82,267.71 L337.45,266.48 L338.10,265.25 L338.75,264.02 L339.41,262.79 L340.07,261.56 L340.74,260.34 L341.43,259.12 L342.12,257.89 L342.81,256.67 L343.52,255.45 L344.24,254.24 L344.96,253.02 L345.70,251.81 L346.44,250.59 L347.20,249.38 L347.96,248.17 L348.73,246.96 L349.52,245.75 L350.31,244.54 L351.12,243.35 L351.94,242.16 L352.78,240.99 L353.63,239.83 L354.50,238.69 L355.39,237.56 L356.29,236.46 L357.21,235.39 L358.16,234.34 L359.12,233.32 L360.11,232.33 L361.12,231.38 L362.16,230.46 L363.22,229.59 L364.30,228.75 L365.42,227.96 L366.56,227.22 L367.73,226.53 L368.93,225.88 L370.16,225.29 L371.43,224.76 L372.71,224.29 L374.02,223.90 L375.35,223.57 L376.68,223.33 L378.02,223.17 L379.35,223.11 L380.67,223.15 L381.98,223.30 L383.27,223.56 L384.53,223.94 L385.76,224.44 L386.95,225.08 L388.11,225.82 L389.23,226.66 L390.33,227.57 L391.41,228.54 L392.47,229.55 L393.51,230.57 L394.54,231.60 L395.56,232.64 L396.56,233.67 L397.56,234.71 L398.54,235.76 L399.51,236.80 L400.46,237.85 L401.41,238.91 L402.34,239.96 L403.26,241.03 L404.16,242.09 L405.06,243.16 L405.94,244.24 L406.81,245.32 L407.66,246.41 L408.51,247.51 L409.34,248.61 L410.16,249.71 L410.96,250.83 L411.76,251.95 L412.54,253.07 L413.31,254.21 L414.06,255.35 L414.80,256.50 L415.53,257.66 L416.25,258.83 L416.95,260.00 L417.64,261.18 L418.32,262.38 L418.98,263.58 L419.63,264.79 L420.27,266.01 L420.89,267.24 L421.51,268.48 L422.10,269.73 L422.69,270.99 L423.27,272.26 L423.83,273.54 L424.39,274.82 L424.94,276.11 L425.47,277.41 L426.00,278.71 L426.52,280.02 L427.04,281.34 L427.55,282.66 L428.05,283.98 L428.54,285.31 L429.04,286.64 L429.52,287.98 L430.01,289.32 L430.49,290.66 L430.97,292.00 L431.45,293.35 L431.92,294.69 L432.40,296.04 L432.87,297.39 L433.35,298.73 L433.82,300.08 L434.30,301.42 L434.78,302.76 L435.27,304.10 L435.75,305.44 L436.25,306.78 L436.74,308.11 L437.24,309.44 L437.75,310.76 L438.26,312.08 L438.79,313.39 L439.31,314.70 L439.85,316.00 L440.39,317.30 L440.95,318.59 L441.51,319.87 L442.09,321.14 L442.68,322.41 L443.27,323.66 L443.88,324.91 L444.51,326.15 L445.14,327.38 L445.79,328.60 L446.46,329.80 L447.14,331.00 L447.83,332.18 L448.55,333.35 L449.28,334.51 L450.02,335.66 L450.79,336.79 L451.57,337.91 L452.38,339.01 L453.20,340.10 L454.04,341.17 L454.91,342.23 L455.79,343.27 L456.70,344.30 L457.64,345.30 L458.59,346.29 L459.57,347.27 L460.57,348.22 L461.59,349.15 L462.64,350.07 L463.70,350.96 L464.79,351.83 L465.89,352.67 L467.01,353.50 L468.16,354.29 L469.31,355.07 L470.49,355.81 L471.68,356.53 L472.89,357.22 L474.11,357.88 L475.34,358.52 L476.59,359.12 L477.85,359.69 L479.12,360.23 L480.40,360.74 L481.70,361.21 L483.00,361.65 L484.31,362.06 L485.63,362.43 L486.96,362.76 L488.30,363.05 L489.64,363.31 L490.98,363.52 L492.34,363.70 L493.69,363.84 L495.06,363.93 L496.42,363.98 L497.79,364.00 L499.16,363.97 L500.53,363.91 L501.90,363.80 L503.28,363.67 L504.65,363.50 L506.03,363.30 L507.41,363.07 L508.79,362.80 L510.17,362.51 L511.55,362.20 L512.94,361.86 L514.32,361.49 L515.70,361.10 L517.08,360.70 L518.46,360.27 L519.84,359.82 L521.21,359.36 L522.59,358.88 L523.96,358.39 L525.33,357.88 L526.70,357.37 L528.07,356.84 L529.43,356.31 L530.79,355.77 L532.15,355.22 L533.50,354.67 L534.85,354.11 L536.20,353.56 L537.54,353.00 L538.87,352.45 L540.21,351.90 L541.54,351.36 L542.87,350.82 L544.19,350.30 L545.51,349.78 L546.83,349.28 L548.15,348.79 L549.47,348.32 L550.78,347.87 L552.09,347.44 L553.41,347.03 L554.72,346.64 L556.03,346.28 L557.34,345.95 L558.65,345.64 L559.96,345.37 L561.27,345.13 L562.58,344.92 L563.89,344.75 L565.21,344.62 L566.52,344.53 L567.84,344.48 L569.16,344.48 L570.48,344.52 L571.80,344.60 L573.13,344.74 L574.45,344.93 L575.78,345.16 L577.12,345.45 L578.45,345.78 L579.78,346.15 L581.11,346.56 L582.43,347.01 L583.75,347.50 L585.07,348.02 L586.38,348.58 L587.68,349.16 L588.98,349.78 L590.26,350.42 L591.54,351.08 L592.80,351.76 L594.06,352.47 L595.29,353.19 L596.52,353.92 L597.73,354.67 L598.92,355.43 L600.10,356.20 L601.26,356.98 L602.40,357.77 L603.53,358.56 L604.65,359.37 L605.76,360.19 L606.85,361.02 L607.93,361.85 L609.01,362.70 L610.07,363.56 L611.13,364.43 L612.17,365.31 L613.21,366.20 L614.25,367.10 L615.28,368.01 L616.31,368.93 L617.33,369.86 L618.35,370.81 L619.37,371.76 L620.39,372.73 L621.40,373.70 L622.42,374.69 L623.44,375.69 L624.46,376.70 L625.49,377.72 L626.52,378.74 L627.56,379.76 L628.60,380.78 L629.66,381.78 L630.72,382.76 L631.80,383.72 L632.89,384.66 L633.99,385.56 L635.11,386.42 L636.25,387.24 L637.41,388.02 L638.58,388.74 L639.78,389.41 L640.99,390.02 L642.22,390.59 L643.47,391.11 L644.74,391.59 L646.01,392.02 L647.31,392.40 L648.61,392.74 L649.93,393.04 L651.26,393.29 L652.61,393.51 L653.96,393.69 L655.32,393.82 L656.69,393.93 L658.07,393.99 L659.45,394.03 L660.84,394.03 L662.23,393.99 L663.63,393.93 L665.04,393.83 L666.44,393.71 L667.85,393.56 L669.26,393.38 L670.67,393.18 L672.08,392.96 L673.49,392.71 L674.89,392.44 L676.29,392.14 L677.69,391.83 L679.09,391.50 L680.48,391.16 L681.86,390.81 L683.24,390.45 L684.62,390.09 L685.99,389.73 L687.36,389.38 L688.72,389.04 L690.08,388.72 L691.44,388.42 L692.79,388.15 L694.14,387.91 L695.49,387.70 L696.83,387.53 L698.17,387.41 L699.51,387.34 L700.85,387.32 L702.18,387.35 L703.52,387.45 L704.85,387.62 L706.17,387.85 L707.50,388.16 L708.82,388.56 L710.15,389.03 L711.47,389.60 L712.79,390.26 L714.11,391.02 L715.43,391.88 L716.75,392.85" stroke="#fff" stroke-width="7.56" fill="none" stroke-linecap="round"/>
<g fill="#fff"><circle cx="237" cy="382" r="5.07"/><circle cx="317" cy="382" r="5.07"/><circle cx="357" cy="346.3" r="5.07"/><circle cx="357" cy="275" r="5.07"/><circle cx="397" cy="382" r="5.07"/><circle cx="397" cy="310.7" r="5.07"/><circle cx="397" cy="239.5" r="5.07"/><circle cx="437" cy="346.3" r="5.07"/><circle cx="477" cy="382" r="5.07"/><circle cx="557" cy="382" r="5.07"/>
<path d="M545.3,340.2 L563,335.5 L563.5,340.8 L547,344.3 Z"/>
<path d="M563.7,335 L581.3,335.5 L580,340.5 L565,340.5 Z"/>
<path d="M581.9,336 L598.9,343.8 L596,348 L582,342 Z"/>
<path d="M598.7,345.4 L612,349 L616.3,353.9 L611,357.8 L600,351 Z"/>
</g>
<g stroke="#fff" stroke-width="1.1" stroke-dasharray="3,2.5" fill="none">
<path d="M248.5,311.5 L276,346"/>
<path d="M527.5,305 L488,345"/>
</g>
<g fill="#fff">
<path d="M278.5,352 L272,347.5 L277.5,343.5 Z"/>
<path d="M485,348.7 L486.5,341.5 L491.5,346 Z"/>
</g>

<text x="195.5" y="175.8" font-family="Liberation Sans" font-size="19" fill="#fff" textLength="356.5" lengthAdjust="spacingAndGlyphs">Story Rollercoaster PowerPoint Template</text>
<text x="346.5" y="201" font-family="Liberation Sans" font-weight="bold" font-size="14.5" fill="#f3cf86" textLength="65" lengthAdjust="spacingAndGlyphs">Climax !</text>
<text x="193" y="305.8" font-family="Liberation Sans" font-style="italic" font-size="11" fill="#fff" textLength="80" lengthAdjust="spacingAndGlyphs">Enticing Incident</text>
<text x="509" y="298.5" font-family="Liberation Sans" font-style="italic" font-size="11" fill="#fff" textLength="51" lengthAdjust="spacingAndGlyphs">Resolution</text>
<text x="196.7" y="435.8" font-family="Liberation Sans" font-weight="bold" font-size="11" fill="#fff" textLength="63" lengthAdjust="spacingAndGlyphs">Exposition</text>
<text x="642.4" y="435.5" font-family="Liberation Sans" font-weight="bold" font-size="11" fill="#fff" textLength="73.5" lengthAdjust="spacingAndGlyphs">Denouement</text>
<text transform="translate(316,285) rotate(-65)" font-family="Liberation Sans" font-size="9.3" fill="#fff" textLength="47.5" lengthAdjust="spacingAndGlyphs">Rising action</text>
<text transform="translate(415.5,237) rotate(66)" font-family="Liberation Sans" font-size="9.3" fill="#fff" textLength="50" lengthAdjust="spacingAndGlyphs">Falling action</text>

</svg>
<div class="a" style="left:10px;top:137px;font-size:11px;color:#c4502e">1</div>
<div class="a" style="left:10px;top:213px;font-size:11px;color:#555">2</div>
<div class="a" style="left:28.4px;top:216.7px;width:106.6px;height:59.1px;background:radial-gradient(ellipse at center,#168bbf 0%,#1487ba 45%,#1074a4 75%,#0a5884 100%)"></div>
<!-- ===== TITLE BAR ===== -->
<div class="a t" style="left:18.5px;top:9.5px;font-size:8.9px;line-height:1">AutoSave</div>
<div class="a" style="left:62.5px;top:7.5px;width:29.5px;height:11.5px;border:1.1px solid #fff;border-radius:6px"></div>
<div class="a" style="left:65.5px;top:10.5px;width:5.6px;height:5.6px;border-radius:50%;background:#fff"></div>
<div class="a t" style="left:76.5px;top:10px;font-size:7.5px;line-height:1;letter-spacing:-0.3px">Off</div>
<svg style="left:0;top:0" width="768" height="27">
 <g fill="none" stroke="#fff" stroke-width="1.1">
  <path d="M103.5,8.5 H114 L116,10.5 V20.5 H103.5 Z"/>
  <path d="M106,8.5 V12.5 H113 V8.5"/>
  <path d="M106,20.5 V15.5 H113.5 V20.5"/>
 </g>
 <g fill="none" stroke="#d98a73" stroke-width="1.1">
  <path d="M128,10 V14 H132 M128,14 C130,9.5 137,9.5 137.5,14.5 C137.5,18 134,20 131,20.5"/>
  <path d="M143.5,12.5 L145,14 L146.5,12.5"/>
  <path d="M166,10 V14 H162 M162.5,11 C160,9 156.5,11 156.5,15 C156.5,18.5 159,20.5 162,20.5 C165,20.5 167.5,18 167.5,15"/>
 </g>
 <g fill="none" stroke="#fff" stroke-width="1.1">
  <path d="M178.3,8.5 H190 M179.3,8.5 V14.8 H189 V8.5 M184.2,14.8 V19.5 M180.8,19.5 H187.5"/>
  <path d="M183,10.3 L186.3,11.8 L183,13.3 Z" fill="#fff" stroke="none"/>
  <path d="M201.5,20.5 C199,17 199,15 201,15 V11 C201,9.5 203.5,9.5 203.5,11 V14 C205.5,13.5 208,14 208,16 C208,18.5 207,20.5 206,21.5 Z"/>
  <path d="M199,12.5 C198,8 205,6.5 206,11"/>
  <path d="M215,12 L217.4,14.4 L219.8,12"/>
  <path d="M232.3,10.8 H237.5"/>
  <path d="M232.5,13 L234.9,15.2 L237.3,13"/>
  <path d="M463,12.5 L465,14.5 L467,12.5" fill="#fff"/>
  <circle cx="504.5" cy="11.5" r="3.6"/>
  <path d="M501.8,14.3 L497.5,18.5"/>
  <path d="M637.5,9.5 H647.5 V16.8 H637.5 Z M637.5,11.5 H647.5 M642.5,11.5 V16.8 M639.5,13.5 L640.5,14.5 L639.5,15.5 M645.5,13.5 L644.5,14.5 L645.5,15.5"/>
  <path d="M674,14 H682"/>
  <path d="M710,9.5 H718 V17.5 H710 Z"/>
  <path d="M745.5,9.5 L753.5,17.5 M753.5,9.5 L745.5,17.5"/>
 </g>
 <defs><clipPath id="av"><circle cx="606.6" cy="13.7" r="9.1"/></clipPath></defs>
 <g clip-path="url(#av)">
  <rect x="597" y="4" width="19" height="19" fill="#6f776f"/>
  <rect x="597" y="4" width="19" height="4" fill="#c9cdc5"/>
  <rect x="610" y="8" width="6" height="6" fill="#d5dad5"/>
  <rect x="597" y="9" width="4" height="5" fill="#4d6a4f"/>
  <ellipse cx="606.3" cy="12.3" rx="3.4" ry="4" fill="#6e5246"/>
  <path d="M602.5,10.5 C602.5,6.2 610.5,6.2 610.5,10.5 L609.5,9.2 L603.5,9.2 Z" fill="#1c1c1c"/>
  <path d="M597,23 C597.5,17 601,15.2 606.3,15.2 C611.5,15.2 615.5,17 616,23 Z" fill="#24233a"/>
 </g>
 <circle cx="606.6" cy="13.7" r="9.1" fill="none" stroke="#6b4a3e" stroke-width="0.5"/>
</svg>
<div class="a t" style="left:264.7px;top:10px;font-size:9px;line-height:1;letter-spacing:-0.05px">20269-01-story-rollercoast...</div>
<div class="a t" style="left:383px;top:10px;font-size:9px;line-height:1">-</div>
<div class="a t" style="left:391px;top:10px;font-size:8.9px;line-height:1;letter-spacing:-0.1px">Saved to this PC</div>
<div class="a t" style="left:535.2px;top:10px;font-size:8.8px;line-height:1;letter-spacing:-0.1px">Farshad Iqbal</div>

<!-- ===== TABS ===== -->
<div class="tab" style="left:13.6px;top:34.9px;line-height:1;font-size:10px;letter-spacing:-0.35px">File</div>
<div class="tab" style="left:52px;top:34.1px;line-height:1;font-size:10.5px;color:#303030">Home</div>
<div class="a" style="left:51.7px;top:46.1px;width:29.3px;height:2.5px;background:#c0502f"></div>
<div class="tab" style="left:98.4px;top:34.9px;line-height:1">Insert</div>
<div class="tab" style="left:142.7px;top:34.9px;line-height:1">Draw</div>
<div class="tab" style="left:183.5px;top:34.9px;line-height:1">Design</div>
<div class="tab" style="left:233px;top:34.9px;line-height:1">Transitions</div>
<div class="tab" style="left:301px;top:34.9px;line-height:1">Animations</div>
<div class="tab" style="left:370px;top:34.9px;line-height:1">Slide Show</div>
<div class="tab" style="left:438px;top:34.9px;line-height:1">Review</div>
<div class="tab" style="left:486px;top:34.9px;line-height:1">View</div>
<div class="tab" style="left:526px;top:34.9px;line-height:1">Add-ins</div>
<div class="tab" style="left:578px;top:34.9px;line-height:1">Help</div>
<div class="tab" style="left:618px;top:34.9px;line-height:1">PowerMockup</div>
<div class="a" style="left:703px;top:30px;width:23.5px;height:17px;background:#fff;border:1px solid #ececec;border-radius:3px"></div>
<div class="a" style="left:734px;top:30px;width:23.5px;height:17px;background:#fff;border:1px solid #ececec;border-radius:3px"></div>

<!-- ===== RIBBON SEPARATORS ===== -->
<div class="sep" style="left:74px"></div>
<div class="sep" style="left:146.5px"></div>
<div class="sep" style="left:309px"></div>
<div class="sep" style="left:459px"></div>
<div class="sep" style="left:604.5px"></div>
<div class="sep" style="left:646px"></div>
<div class="sep" style="left:691.5px"></div>
<div class="sep" style="left:736px"></div>

<!-- ===== RIBBON LABELS ===== -->
<div class="lbl" style="left:11.7px;top:113.7px;line-height:1">Clipboard</div>
<div class="lbl" style="left:98.6px;top:113.7px;line-height:1">Slides</div>
<div class="lbl" style="left:213px;top:113.7px;line-height:1">Font</div>
<div class="lbl" style="left:357.5px;top:113.7px;line-height:1">Paragraph</div>
<div class="lbl" style="left:508.7px;top:113.7px;line-height:1">Drawing</div>
<div class="lbl" style="left:658.6px;top:113.7px;line-height:1">Voice</div>
<div class="lbl" style="left:695.8px;top:113.7px;line-height:1">Designer</div>

<!-- ===== RIBBON BUTTON TEXT ===== -->
<div class="btn" style="left:12.7px;top:83.5px;line-height:1">Paste</div>
<div class="btn" style="left:88px;top:83.5px;line-height:1">New</div>
<div class="btn" style="left:83.6px;top:95.5px;line-height:1">Slide</div>
<div class="btn" style="left:467px;top:83.5px;line-height:1;letter-spacing:-0.2px">Shapes</div>
<div class="btn" style="left:499.8px;top:83.5px;line-height:1;letter-spacing:-0.1px">Arrange</div>
<div class="btn" style="left:539px;top:83.5px;line-height:1;color:#b3b3b3">Quick</div>
<div class="btn" style="left:535.8px;top:95.5px;line-height:1;color:#b3b3b3">Styles</div>
<div class="btn" style="left:611.4px;top:81.7px;line-height:1">Editing</div>
<div class="btn" style="left:654.7px;top:83.7px;line-height:1">Dictate</div>
<div class="btn" style="left:700.6px;top:83.5px;line-height:1">Design</div>
<div class="btn" style="left:703.3px;top:95.5px;line-height:1">Ideas</div>

<!-- ===== STATUS BAR TEXT ===== -->
<div class="st" style="left:7.3px;top:485.6px;line-height:1">Slide 1 of 2</div>
<div class="st" style="left:75.5px;top:485.6px;line-height:1">English (United States)</div>
<div class="st" style="left:192.5px;top:485.6px;line-height:1">Accessibility: Investigate</div>
<div class="st" style="left:444.7px;top:485.6px;line-height:1">Notes</div>
<div class="st" style="left:718px;top:485.6px;line-height:1;font-size:8.2px">59%</div>
<div class="a" style="left:482.5px;top:481px;width:30px;height:17px;background:#d2d2d2"></div>

<!-- ===== SCROLLBAR ===== -->
<div class="a" style="left:755px;top:126.5px;width:11px;height:309px;background:#dedede"></div>
<div class="a" style="left:755px;top:126.5px;width:11px;height:155px;background:#fff;border:1px solid #c8c8c8"></div>
<div class="a" style="left:755px;top:138px;width:11px;height:1px;background:#c8c8c8"></div>
<div class="a" style="left:755px;top:424.5px;width:11px;height:11px;background:#fff;border:1px solid #c8c8c8"></div>

<svg style="left:0;top:0" width="768" height="130">
 <!-- share / comment icons -->
 <g fill="none" stroke="#c4502e" stroke-width="1">
  <path d="M710.5,37 V42.5 H717.5 V39"/><path d="M712.5,40 L714,37 L718.5,35 M716.5,34 L719,35 L717.8,37.5"/>
  <path d="M741.5,34.5 H750 V39.8 H744.5 L742.5,41.8 V39.8 H741.5 Z"/>
 </g>
 <!-- ===== Clipboard ===== -->
 <path d="M15,59.5 H30.5 V78 H15 Z" fill="#fffaf3" stroke="#e8962f" stroke-width="1.3"/>
 <path d="M18.5,61.5 V59 H21 C21,56.3 25,56.3 25,59 H27.5 V61.5 Z" fill="#fff" stroke="#777" stroke-width="1"/>
 <rect x="24.5" y="65.5" width="11.3" height="13.3" rx="1.2" fill="#fff" stroke="#6a6a6a" stroke-width="1.3"/>
 <path d="M21,98.5 L23,100.5 L25,98.5" fill="none" stroke="#444" stroke-width="1.1"/>
 <g fill="none" stroke="#b0b0b0" stroke-width="1">
  <path d="M45.5,56 L49.6,63.8 M50.5,56 L46.4,63.8"/><circle cx="45.8" cy="65.6" r="1.6"/><circle cx="50.2" cy="65.6" r="1.6"/>
  <path d="M42.3,74.5 H46.5 V84.5 H42.3 Z"/><path d="M46.8,76.5 H51 L53.5,79 V85.6 H46.8 Z" fill="#f3f3f3"/>
  <path d="M49,82.5 H51.5"/>
  <path d="M60.5,79 L62,80.5 L63.5,79"/>
  <path d="M50,92.5 L53.5,95.5 M51.8,94 L48.5,97.5 M42.5,99 L47,95.5 L51,99.5 L47.5,103 Z M44.5,101 L48,98"/>
 </g>
 <path d="M66,116 H71 V121 M66.5,116.5 L71,121 M68,121 H71" fill="none" stroke="#8a8a8a" stroke-width="0.9"/>
 <!-- ===== Slides ===== -->
 <rect x="86.5" y="59" width="21" height="16.5" fill="#fff" stroke="#6f6f6f" stroke-width="1.2"/>
 <path d="M88.5,61 H105.5 V73.5 H88.5 Z M88.5,64 H105.5 M96.8,64 V73.5" fill="none" stroke="#8a8a8a" stroke-width="0.9"/>
 <rect x="84" y="54.5" width="8" height="8" fill="#f3f3f3"/>
 <path d="M84.8,60.5 H96.8 M90.5,55 V66" stroke="#3fae5f" stroke-width="1.3"/>
 <path d="M106.5,100 L108.3,101.8 L110.1,100" fill="none" stroke="#555" stroke-width="1"/>
 <g fill="none" stroke="#666" stroke-width="1.2">
  <path d="M116.5,56.8 H127.5 V66 H116.5 Z"/>
  <path d="M118.3,58.7 H125.7 V64.1 H118.3 Z M122,58.7 V64.1" stroke="#999" stroke-width="0.8"/>
  <path d="M116.5,75 H127.5 V84.5 H116.5 Z"/>
  <path d="M118.5,77 H125.5 M118.5,82.5 H125.5" stroke="#aaa" stroke-width="0.8"/>
  <path d="M116.5,93 H127.5 V104.5 H116.5 Z M118.5,97 H125.5 V102.5 H118.5 Z" />
 </g>
 <g fill="none" stroke="#555" stroke-width="1">
  <path d="M131.3,61.5 L133.8,64 L136.3,61.5"/>
  <path d="M131.3,97.5 L133.8,100 L136.3,97.5"/>
 </g>
 <path d="M116.5,93.3 H127.5" stroke="#55b870" stroke-width="2.2"/>
 <rect x="115.5" y="72" width="5" height="6" fill="#f3f3f3"/>
 <path d="M120.5,80 C121.5,76.5 120,74.2 117.3,74.2 M119,72.5 L117,74.2 L119,76" fill="none" stroke="#3b8fd8" stroke-width="1.1"/>
 <!-- ===== Font ===== -->
 <rect x="153.5" y="53.5" width="114" height="17" fill="#e1e1e1" stroke="#d2d2d2"/>
 <rect x="267.5" y="53.5" width="35.5" height="17" fill="#e1e1e1" stroke="#d2d2d2"/>
 <g fill="none" stroke="#a8a8a8" stroke-width="0.9">
  <path d="M262,62 L263.5,63.5 L265,62"/><path d="M297,62 L298.5,63.5 L300,62"/>
 </g>
 <g font-family="Liberation Sans" fill="#a3a3a3" font-size="10">
  <text x="159" y="83.7" font-weight="bold">B</text>
  <text x="176.5" y="83.7" font-style="italic">I</text>
  <text x="192.5" y="83.7">U</text>
  <text x="209" y="83.7">S</text>
  <text x="224.5" y="83.7" font-size="8.5">ab</text>
  <text x="240.5" y="81.5" font-size="8.5">AV</text>
  <text x="185" y="103.5" font-size="10">A</text>
  <text x="212.5" y="102.5" font-size="11">Aa</text>
  <text x="248.3" y="102.5" font-size="13">A</text>
  <text x="266.5" y="102.5" font-size="9.8">A</text>
  <text x="288.3" y="102.5" font-size="13">A</text>
 </g>
 <g fill="none" stroke="#a8a8a8" stroke-width="0.9">
  <path d="M192.5,85.5 H201"/><path d="M223.5,81 H234.5"/><path d="M241,84.5 H252 M241,84.5 L242.5,83 M241,84.5 L242.5,86 M252,84.5 L250.5,83 M252,84.5 L250.5,86"/>
  <path d="M256,80 L257.5,81.5 L259,80"/>
  <path d="M175,98 L176.5,99.5 L178,98"/><path d="M203,98 L204.5,99.5 L206,98"/><path d="M230,98 L231.5,99.5 L233,98"/>
  <path d="M257.2,96 L258.7,93.5 L260.2,96"/><path d="M273.5,93.3 L275.2,95.3 L276.9,93.3"/>
  <path d="M241.5,93 V106" stroke="#d2d2d2"/><path d="M282.5,93 V106" stroke="#d2d2d2"/>
  <path d="M160,101 L166,94.5 L168,96.5 L162,103 Z"/>
  <path d="M294,101.5 L298.5,97.5 L301.5,100.5 L297,104.5 Z"/>
 </g>
 <rect x="156" y="103" width="12" height="2.3" fill="#b5b5b5"/>
 <rect x="184.5" y="103" width="12.5" height="2.3" fill="#b5b5b5"/>
 <path d="M301.5,116 H306.5 V121 M302,116.5 L306.5,121 M303.5,121 H306.5" fill="none" stroke="#8a8a8a" stroke-width="0.9"/>
 <!-- ===== Paragraph ===== -->
 <g fill="none" stroke="#ababab" stroke-width="1">
  <path d="M321,57 H330 M321,61.5 H330 M321,66 H330 M318,57 H319 M318,61.5 H319 M318,66 H319"/>
  <path d="M336,61 L337.5,62.5 L339,61"/>
  <path d="M349,57 H358 M349,61.5 H358 M349,66 H358 M346,55.5 V58 M346,60.5 V63 M346,65 V67.5"/>
  <path d="M364.5,61 L366,62.5 L367.5,61"/>
  <path d="M376.5,55 V68" stroke="#d2d2d2"/>
  <path d="M387,57 H394.5 M387,61.5 H394.5 M387,66 H394.5 M383.5,56 V67 M382,58 L383.5,56 L385,58 M382,65 L383.5,67 L385,65"/>
  <path d="M399,61 L400.5,62.5 L402,61"/>
  <path d="M430,56 V67 M428.5,65.5 L430,67 L431.5,65.5 M435,61 V67 M433.5,65.5 L435,67 L436.5,65.5 M432,60 L434,55 L436,60"/>
  <path d="M444,61 L445.5,62.5 L447,61"/>
  <path d="M318.5,75 H330 M323,78.5 H330 M323,82 H330 M318.5,85.5 H330 M322,80 L319,80 M320,78.5 L318.5,80 L320,81.5"/>
  <path d="M336,75 H347 M340,78.5 H347 M340,82 H347 M336,85.5 H347 M336,80 H339 M337.5,78.5 L339,80 L337.5,81.5"/>
  <path d="M353.5,74 V87" stroke="#d2d2d2"/>
  <path d="M361,77 L363.5,80 L361,83"/><path d="M366,77 V84 M368,77 V84 M365,77 H369"/>
  <path d="M378,77 V84 M380,77 V84 M377,77 H381"/><path d="M386.5,77 L383.5,80 L386.5,83"/>
  <path d="M394,74 V87" stroke="#d2d2d2"/>
  <path d="M402,77 H405 M402,80 H405 M402,83 H405 M407.5,77 H410.5 M407.5,80 H410.5 M407.5,83 H410.5"/>
  <path d="M417,79 L418.5,80.5 L420,79"/>
  <path d="M428,75 V86 H440 V75 Z M434,74 V87" stroke-dasharray="2,1.5"/>
  <path d="M444,79 L445.5,80.5 L447,79"/>
  <path d="M318.5,94 H330 M318.5,97.5 H326 M318.5,101 H330 M318.5,104 H326"/>
  <path d="M336,94 H347 M338,97.5 H345 M336,101 H347 M338,104 H345"/>
  <path d="M352.5,94 H364 M356.5,97.5 H364 M352.5,101 H364 M356.5,104 H364"/>
  <path d="M369.5,94 H381 M369.5,97.5 H381 M369.5,101 H381 M369.5,104 H381"/>
  <path d="M386.5,98 L388,99.5 L389.5,98"/>
  <path d="M428,93 H437 L440,97 M431,97 H440 V103 H431 Z"/>
  <path d="M444,98 L445.5,99.5 L447,98"/>
 </g>
 <path d="M450.5,116 H455.5 V121 M451,116.5 L455.5,121 M452.5,121 H455.5" fill="none" stroke="#8a8a8a" stroke-width="0.9"/>
 <!-- ===== Drawing ===== -->
 <rect x="470.5" y="56" width="15" height="14.5" fill="#6fb0ea" stroke="#3d85c6" stroke-width="0.9"/>
 <circle cx="484.8" cy="69.8" r="7.5" fill="#fff" stroke="#555" stroke-width="1.2"/>
 <path d="M479.5,99 L481,100.5 L482.5,99" fill="none" stroke="#555" stroke-width="1"/>
 <rect x="508" y="59" width="15" height="15.5" fill="#fbd38c" stroke="#e08e2e" stroke-width="1"/>
 <rect x="505" y="56" width="8.5" height="9.5" fill="#fff" stroke="#555" stroke-width="1.1"/>
 <rect x="517.5" y="68.5" width="9" height="9" fill="#fff" stroke="#555" stroke-width="1.1"/>
 <path d="M514,99 L515.5,100.5 L517,99" fill="none" stroke="#555" stroke-width="1"/>
 <rect x="541" y="56.5" width="21.5" height="21" fill="#e8e8e8" stroke="#c6c6c6" stroke-width="1"/>
 <path d="M563,65 L553,74 M551,73 C549,75 548,77 545,78 C548,79 552,78 554,75.5" fill="none" stroke="#bdbdbd" stroke-width="1.4"/>
 <path d="M562,99 L563.5,100.5 L565,99" fill="none" stroke="#c0c0c0" stroke-width="1"/>
 <g fill="none" stroke="#a8a8a8" stroke-width="1">
  <path d="M574,61 L578,57 L582,61 L578,64.5 Z M577,56 V59"/><path d="M583.5,62 C584.5,63.5 584.5,65 583.5,65"/>
  <path d="M574,73.5 H582 M574,73.5 V82 H579 M583.5,74 L578,80 L577,82 L579,81 L584.5,75"/>
  <path d="M573.5,96 L578,92.5 H584 L584.5,96 L580,99.5 H574 Z M573.5,96 H580 L584.5,92.5 M580,96 V99.5"/>
  <path d="M590,61 L591.5,62.5 L593,61"/><path d="M590,78 L591.5,79.5 L593,78"/><path d="M590,95 L591.5,96.5 L593,95"/>
 </g>
 <rect x="572" y="66" width="13" height="2.5" fill="#b9b9b9"/>
 <rect x="572" y="83" width="13" height="2.5" fill="#b9b9b9"/>
 <path d="M596.5,116 H601.5 V121 M597,116.5 L601.5,121 M598.5,121 H601.5" fill="none" stroke="#8a8a8a" stroke-width="0.9"/>
 <!-- ===== Editing ===== -->
 <rect x="613.5" y="53.5" width="25" height="23" fill="#fff" stroke="#e0e0e0"/>
 <circle cx="627.5" cy="63" r="3.6" fill="none" stroke="#555" stroke-width="1.1"/>
 <path d="M624.8,65.7 L620.5,70" stroke="#555" stroke-width="1.2"/>
 <path d="M624.3,97 L625.8,98.5 L627.3,97" fill="none" stroke="#555" stroke-width="1"/>
 <!-- ===== Dictate ===== -->
 <rect x="663.5" y="56.5" width="10.5" height="16" rx="2" fill="#80bcea" stroke="#3c82c8" stroke-width="1"/>
 <path d="M661.5,66 V69 C661.5,73 665,75 669,75 C673,75 676.5,73 676.5,69 V66 M669,75 V77.5 M665.5,77.5 H672.5" fill="none" stroke="#555" stroke-width="1"/>
 <path d="M667.5,99 L669,100.5 L670.5,99" fill="none" stroke="#555" stroke-width="1"/>
 <!-- ===== Design Ideas ===== -->
 <rect x="703.5" y="58.5" width="21" height="17" fill="#fff" stroke="#6a6a6a" stroke-width="1"/>
 <path d="M705,60 H723 V74 H705 Z M705,64.3 H723 M718.8,64.3 V74" fill="none" stroke="#555" stroke-width="0.9"/>
 <path d="M706.5,55.3 H711.3 L708.3,60.5 H711.3 L702.3,69.8 L705.3,62.5 H702.5 Z" fill="#f8d47c" stroke="#eb8a25" stroke-width="0.9" stroke-linejoin="round"/>
 <!-- collapse -->
 <path d="M753.5,121 L756.5,118 L759.5,121" fill="none" stroke="#444" stroke-width="1"/>
</svg>

<svg style="left:0;top:0" width="768" height="499">
 <g fill="none" stroke="#555" stroke-width="1">
  <!-- accessibility -->
  <path d="M183,484.5 V489 M181,487 L183,489 L185,487"/>
  <path d="M180,486.5 C177.5,487.5 177,492.5 180.5,494 C182,494.8 184,494.5 185,493.5" stroke-dasharray="1.6,1.2"/>
  <path d="M185.5,490.5 L189,494 M189,490.5 L185.5,494"/>
  <!-- notes -->
  <path d="M431,490 H443 M431,492.5 H443 M431,495 H443 M434,487.5 L437,485 L440,487.5"/>
  <!-- normal view -->
  <path d="M492.5,485.5 H503.5 V494.5 H492.5 Z M495,487.5 H501.5 V491.5 H495 Z M492.5,493 H503.5"/>
  <!-- sorter -->
  <path d="M523,485.5 H527.5 V489 H523 Z M529.5,485.5 H534 V489 H529.5 Z M523,491 H527.5 V494.5 H523 Z M529.5,491 H534 V494.5 H529.5 Z"/>
  <!-- reading -->
  <path d="M554,485.5 H564.5 V494.5 H554 Z M559.25,485.5 V494.5 M556,488 H557.5 M556,490.5 H557.5 M561,488 H562.5 M561,490.5 H562.5"/>
  <!-- slideshow -->
  <path d="M585.5,485 H594.5 M586.5,485 V491 H593.5 V485 M590,491 V495 M587.5,495 H592.5"/>
  <!-- zoom -->
  <path d="M610.5,490.5 H617"/>
  <path d="M701.5,490.5 H708 M704.75,487.2 V493.8"/>
  <path d="M620.5,490.5 H697.5" stroke="#c4c4c4"/>
  <path d="M659.5,488.5 V492.5" stroke="#999"/>
  <!-- fit -->
  <path d="M746,487 H752 V494 H746 Z M749,484.5 V486 M749,495 V496.5 M743.5,490.5 H745 M753,490.5 H754.5"/>
  <path d="M747.5,485.5 L749,484 L750.5,485.5 M747.5,495.5 L749,497 L750.5,495.5 M744.5,489 L743,490.5 L744.5,492 M753.5,489 L755,490.5 L753.5,492"/>
  <!-- scroll arrows -->
 </g>
 <rect x="640.5" y="485.5" width="4" height="9" fill="#777"/>
 <path d="M757.5,134 L760.5,130.5 L763.5,134 Z" fill="#666"/>
 <path d="M757.5,428.5 L760.5,432 L763.5,428.5 Z" fill="#666"/>
 <g fill="#666">
  <path d="M757.3,443.6 L760.5,440 L763.7,443.6 Z"/>
  <path d="M757.3,446.6 L760.5,443 L763.7,446.6 Z"/>
  <path d="M757.3,453 L760.5,456.6 L763.7,453 Z"/>
  <path d="M757.3,456 L760.5,459.6 L763.7,456 Z"/>
 </g>
</svg>
<div class="a" style="left:68.8px;top:244.3px;width:4.6px;height:4.6px;border-radius:50%;background:conic-gradient(#e84c3d 0 25%,#f5b400 0 50%,#2aa84a 0 75%,#1e7ec8 0)"></div>
<div class="a" style="left:74px;top:245px;font-size:3.8px;font-weight:bold;color:#eef6fa;line-height:1;letter-spacing:0.1px">SlideModel.</div>

</body></html>
